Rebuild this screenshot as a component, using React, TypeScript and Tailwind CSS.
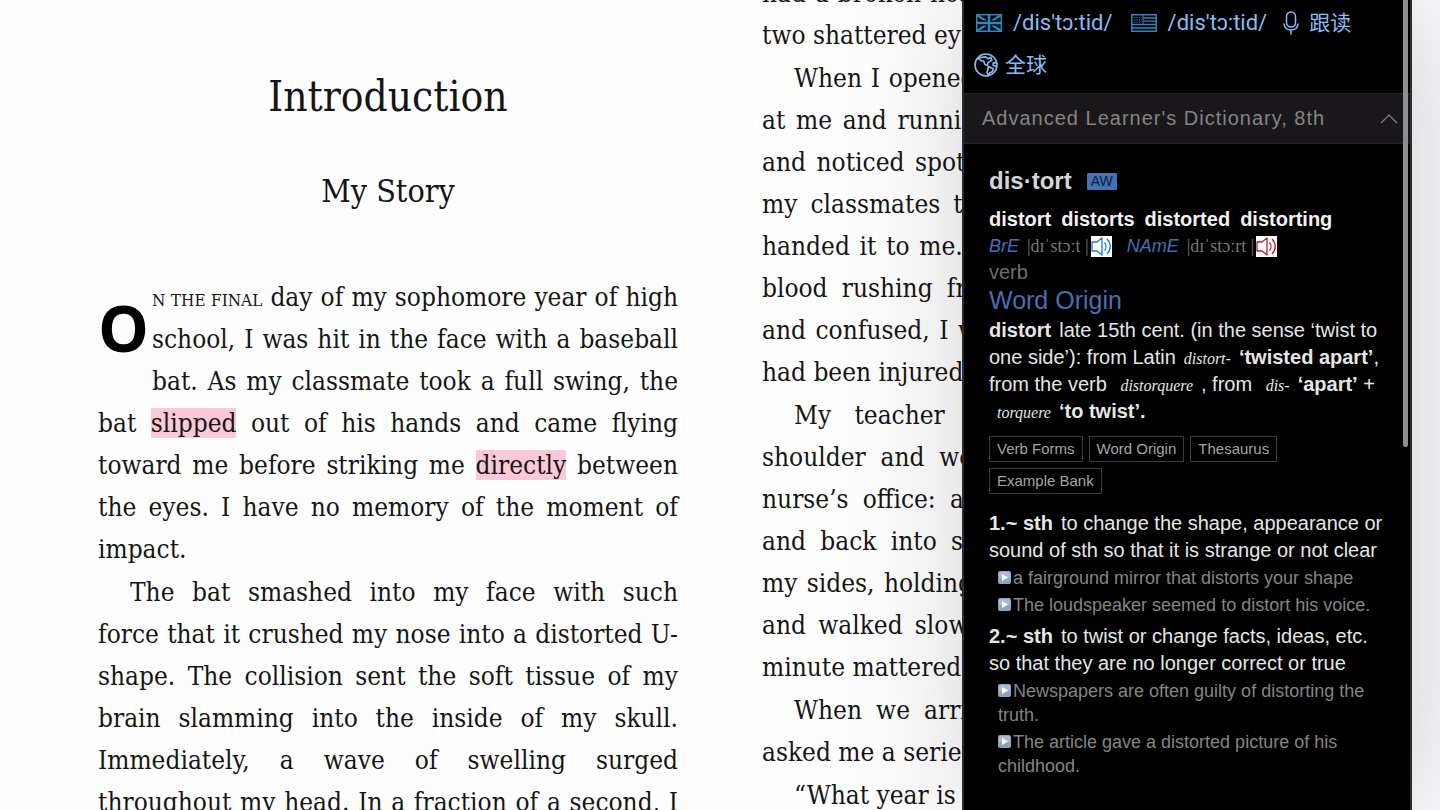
import type { ReactNode } from 'react';

type Line = ReactNode;

const Mark = ({ children }: { children: ReactNode }) => (
  <mark className="inline-block bg-[#fdc8d7] leading-[30px] text-inherit">{children}</mark>
);

const opening: Line[] = [
  <>
    <span className="text-[17px] leading-none">N THE FINAL</span> day of my sophomore year of high
  </>,
  'school, I was hit in the face with a baseball',
  'bat. As my classmate took a full swing, the',
  <>
    bat <Mark>slipped</Mark> out of his hands and came flying
  </>,
  <>
    toward me before striking me <Mark>directly</Mark> between
  </>,
  'the eyes. I have no memory of the moment of',
  'impact.',
];

const smashed: Line[] = [
  'The bat smashed into my face with such',
  'force that it crushed my nose into a distorted U-',
  'shape. The collision sent the soft tissue of my',
  'brain slamming into the inside of my skull.',
  'Immediately, a wave of swelling surged',
  'throughout my head. In a fraction of a second, I',
  'had a broken nose, multiple skull fractures, and',
];

const rightPage: { indent: boolean; lines: Line[] }[] = [
  {
    indent: false,
    lines: ['had a broken nose, multiple skull fractures, and', 'two shattered eye sockets.'],
  },
  {
    indent: true,
    lines: [
      'When I opened my eyes, I saw people staring',
      'at me and running over to help. I looked down',
      'and noticed spots of red on my clothes. One of',
      'my classmates took the shirt off his back and',
      'handed it to me. I used it to plug the stream of',
      'blood rushing from my broken nose. Shocked',
      'and confused, I was unaware of how seriously I',
      'had been injured.',
    ],
  },
  {
    indent: true,
    lines: [
      'My teacher looped his arm around my',
      'shoulder and we began the long walk to the',
      'nurse’s office: across the field, down the hill,',
      'and back into school. Random hands touched',
      'my sides, holding me upright. We took our time',
      'and walked slowly. Nobody realized that every',
      'minute mattered.',
    ],
  },
  {
    indent: true,
    lines: ['When we arrived at the nurse’s office, she', 'asked me a series of questions.'],
  },
  { indent: true, lines: ['“What year is it?”'] },
];

function Paragraph({
  lines,
  indent = false,
  children,
}: {
  lines: Line[];
  indent?: boolean;
  children?: ReactNode;
}) {
  return (
    <p>
      {children}
      {lines.map((line, i) => (
        <span
          key={i}
          className={`block whitespace-nowrap last:[text-align-last:auto] [text-align-last:justify] ${
            indent && i === 0 ? 'pl-8' : ''
          }`}
        >
          {line}
        </span>
      ))}
    </p>
  );
}

function UkFlag() {
  return (
    <svg width="26" height="18" viewBox="0 0 26 18" fill="none" stroke="#2f86bb" aria-hidden="true">
      <path d="M1 1l24 16M25 1L1 17" strokeWidth="2.2" />
      <path d="M13 1v16M1 9h24" stroke="#000" strokeWidth="5" />
      <path d="M13 1v16M1 9h24" strokeWidth="2.6" />
      <rect x="0.75" y="0.75" width="24.5" height="16.5" strokeWidth="1.5" />
    </svg>
  );
}

function UsFlag() {
  return (
    <svg width="26" height="18" viewBox="0 0 26 18" fill="none" stroke="#2f86bb" aria-hidden="true">
      <rect x="0.75" y="0.75" width="24.5" height="16.5" strokeWidth="1.5" />
      <path d="M12 4h13M12 7.2h13M1 10.5h24M1 14h24" strokeWidth="1.3" />
      <path d="M12 1v9.5" strokeWidth="1" />
      <path d="M3 3.6h8M3 5.8h8M3 8h8" strokeWidth="1" strokeDasharray="1.3 1.2" />
    </svg>
  );
}

function MicIcon() {
  return (
    <svg width="16" height="24" viewBox="0 0 16 24" fill="none" stroke="currentColor" strokeWidth="1.5" strokeLinecap="round" aria-hidden="true">
      <rect x="3.5" y="1" width="9" height="15" rx="4.5" />
      <path d="M1 13c.5 3.800 3.200 6 7 6s6.500-2.200 7-6M8 19v4" />
    </svg>
  );
}

function GlobeIcon() {
  return (
    <svg width="24" height="24" viewBox="0 0 25 25" fill="none" stroke="currentColor" strokeWidth="1.7" strokeLinejoin="round" aria-hidden="true">
      <circle cx="12.5" cy="12.5" r="11.4" />
      <path d="M4 5.500L7.500 8l2.500.5 1.500 3.500 2.500 1 .5-3 4-2.500-1-3-2.500 1.500-3-2L8 4.500z" />
      <path d="M15 14l5 2.500-1 3-2.500 1-1.500 3-1.500-3.500 1-2.500zM23 10l-3 .5 0 2.500 3.500 1" />
    </svg>
  );
}

function Speaker({ label, tone }: { label: string; tone: string }) {
  return (
    <button aria-label={label} className={`h-[21px] w-[21px] bg-white ${tone}`}>
      <svg width="21" height="21" viewBox="0 0 21 21" fill="none" stroke="currentColor" strokeWidth="1.3">
        <path d="M1 6h5l5-4v17l-5-4H1z" strokeLinejoin="round" />
        <path d="M13.500 6.500c2 2.300 2 5.700 0 8M16 3c4.300 4.200 4.300 10.800 0 15" />
      </svg>
    </button>
  );
}

function Example({ children }: { children: ReactNode }) {
  return (
    <li className="ml-[9px]">
      <svg width="13" height="13" viewBox="0 0 13 13" className="mr-[2px] inline-block align-baseline" aria-hidden="true">
        <rect width="13" height="13" rx="2" fill="#8ea3bd" />
        <rect x="1" y="1" width="11" height="6" rx="1.500" fill="#a9bbd0" />
        <path d="M4 3l6 3.500L4 10z" fill="#fff" />
      </svg>
      {children}
    </li>
  );
}

function Latin({ children }: { children: ReactNode }) {
  return <i className="mx-2 font-['Liberation_Serif',serif] text-[16px] leading-none">{children}</i>;
}

function Dictionary() {
  return (
    <aside className="absolute inset-y-0 right-7 w-[450px] overflow-hidden border-x-2 border-[#2c2c2e] bg-black font-['Liberation_Sans',sans-serif] text-[20px] leading-[27px] text-[#e6e6e6] shadow-[0_0_110px_rgba(0,0,0,0.16)]">
      <div className="h-[93px] pt-[2px] pl-[10px] font-['Roboto','Noto_Sans_CJK_SC',sans-serif] text-[22px] leading-[42px] text-[#86bdf3]">
        <div className="flex items-center">
          <button className="ml-[2px] flex items-center gap-[11px]">
            <UkFlag />
            /dis'tɔ:tid/
          </button>
          <button className="ml-[18px] flex items-center gap-[11px]">
            <UsFlag />
            /dis'tɔ:tid/
          </button>
          <button className="ml-4 flex items-center gap-[10px] text-[21px]">
            <MicIcon />
            跟读
          </button>
        </div>
        <button className="flex items-center gap-[7px] text-[21px]">
          <GlobeIcon />
          全球
        </button>
      </div>

      <button className="flex h-[51px] w-full items-center justify-between border-y border-[#272427] bg-[#1a171a] pr-3 pl-[18px] tracking-wider text-[#858486]">
        Advanced Learner's Dictionary, 8th
        <svg width="18" height="10" viewBox="0 0 18 10" fill="none" stroke="currentColor" strokeWidth="1.200" aria-hidden="true">
          <path d="M1 9l8-8 8 8" />
        </svg>
      </button>

      <div className="pr-5 pl-[25px]">
        <div className="mt-[22px] flex items-center gap-[15px]">
          <h1 className="text-[24px] leading-[30px] font-bold text-[#d6d6d6]">dis·tort</h1>
          <span className="rounded-[1px] bg-[#4470b4] px-1 text-[14px] leading-[17px] text-[#0f1f3a]">AW</span>
        </div>
        <div className="mt-[10px] flex gap-[10px] font-bold text-[#f2f2f2]">
          <span>distort</span>
          <span>distorts</span>
          <span>distorted</span>
          <span>distorting</span>
        </div>
        <div className="flex items-center font-['Liberation_Serif',serif] text-[18px] text-[#77777a]">
          <i className="mr-2 font-['Liberation_Sans',sans-serif] text-[#4470b4]">BrE</i>
          <span className="mr-[2px]">|dɪˈstɔːt |</span>
          <Speaker label="BrE" tone="text-[#1c7db8]" />
          <i className="mr-2 ml-[15px] font-['Liberation_Sans',sans-serif] text-[#4470b4]">NAmE</i>
          <span className="mr-[2px]">|dɪˈstɔːrt |</span>
          <Speaker label="NAmE" tone="text-[#b3232f]" />
        </div>
        <div className="leading-[24px] text-[#6f6e70]">verb</div>
        <h2 className="text-[25px] leading-[33px] text-[#4470b4]">Word Origin</h2>
        <p className="whitespace-nowrap">
          <b className="mr-2">distort</b>late 15th cent. (in the sense ‘twist to
          <br />
          one side’): from Latin<Latin>distort-</Latin>
          <b>‘twisted apart’</b>,
          <br />
          from the verb <Latin>distorquere</Latin>, from <Latin>dis-</Latin>
          <b>‘apart’</b> +
          <br />
          <Latin>torquere</Latin>
          <b>‘to twist’.</b>
        </p>

        <div className="mt-[11px] flex flex-wrap gap-[6px] text-[15px] leading-[24px] text-[#a5a4a6]">
          {['Verb Forms', 'Word Origin', 'Thesaurus', 'Example Bank'].map((name) => (
            <button key={name} className="border border-[#3c3b3d] px-[7px]">
              {name}
            </button>
          ))}
        </div>

        <p className="mt-4 whitespace-nowrap">
          <b className="mr-2">1.~ sth</b>to change the shape, appearance or
          <br />
          sound of sth so that it is strange or not clear
        </p>
        <ul className="mt-[2px] space-y-[3px] text-[18px] leading-[24px] text-[#858486]">
          <Example>a fairground mirror that distorts your shape</Example>
          <Example>The loudspeaker seemed to distort his voice.</Example>
        </ul>
        <p className="mt-[6px] whitespace-nowrap">
          <b className="mr-2">2.~ sth</b>to twist or change facts, ideas, etc.
          <br />
          so that they are no longer correct or true
        </p>
        <ul className="mt-[2px] space-y-[3px] text-[18px] leading-[24px] text-[#858486]">
          <Example>
            Newspapers are often guilty of distorting the
            <br />
            truth.
          </Example>
          <Example>
            The article gave a distorted picture of his
            <br />
            childhood.
          </Example>
        </ul>
      </div>

      <div className="absolute top-0 right-[2px] h-[447px] w-[5px] rounded-b-full bg-[#8e8d8f]" />
    </aside>
  );
}

export default function App() {
  return (
    <main className="relative h-screen overflow-hidden bg-[#fefdfe] font-['DejaVu_Serif_Condensed','DejaVu_Serif',serif] text-[26px] leading-[42px] text-[#151515]">
      <div className="grid grid-cols-2 gap-[84px] px-[98px]">
        <article>
          <h1 className="mt-[70px] text-center text-[42px] leading-[54px]">Introduction</h1>
          <h2 className="mt-[46px] mb-16 text-center text-[32px] leading-[42px]">My Story</h2>
          <div className="space-y-px">
            <Paragraph lines={opening}>
              <span className="float-left h-[126px] w-[54px] pt-5 font-['Open_Sans',sans-serif] text-[64px] leading-[64px] font-bold text-black">
                O
              </span>
            </Paragraph>
            <Paragraph lines={smashed} indent />
          </div>
        </article>
        <article className="-mt-7 space-y-px">
          {rightPage.map((p, i) => (
            <Paragraph key={i} lines={p.lines} indent={p.indent} />
          ))}
        </article>
      </div>
      <div className="absolute inset-y-0 right-0 w-7 bg-[#f9f8fa]" />
      <Dictionary />
    </main>
  );
}
